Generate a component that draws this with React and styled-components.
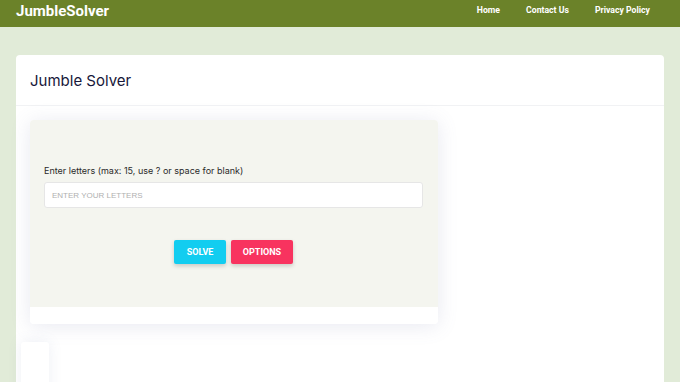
import React from 'react';
import styled, { createGlobalStyle } from 'styled-components';

const GlobalStyle = createGlobalStyle`
  body {
    margin: 0;
    background: #e1ebd8;
    font-family: "Inter", "Liberation Sans", sans-serif;
    overflow: hidden;
  }
`;

const NavBar = styled.nav`
  height: 27px;
  background: #6b8229;
  display: flex;
  align-items: center;
  justify-content: space-between;
  padding: 0 30px 0 16px;
`;

const Brand = styled.div`
  font-family: Roboto, "Liberation Sans", sans-serif;
  font-weight: 700;
  font-size: 15px;
  line-height: 18px;
  color: #fff;
  margin-top: -6px;
`;

const NavLinks = styled.div`
  display: flex;
  gap: 26px;
  margin-top: -6px;
`;

const NavLink = styled.a`
  font-family: Roboto, "Liberation Sans", sans-serif;
  font-weight: 700;
  font-size: 8.7px;
  line-height: 11px;
  color: #fff;
  text-decoration: none;
`;

const Main = styled.main`
  padding: 28px 16px 0;
`;

const Card = styled.section`
  background: #fff;
  border-radius: 4px;
  min-height: 400px;
`;

const CardHeader = styled.header`
  height: 50px;
  display: flex;
  align-items: center;
  padding: 0 14px;
  border-bottom: 1px solid #f1f2f4;
  font-size: 15px;
  color: #17173a;
`;

const CardBody = styled.div`
  padding: 14px 14px 0;
`;

const Panel = styled.div`
  width: 408px;
  border-radius: 4px;
  overflow: hidden;
  box-shadow: 0 2px 20px rgba(110, 120, 170, 0.16);
`;

const PanelTop = styled.div`
  background: #f4f5ef;
  padding: 45px 15px 43px 14px;
`;

const PanelFoot = styled.div`
  height: 17px;
  background: #fff;
`;

const Label = styled.label`
  display: block;
  font-size: 9px;
  line-height: 12px;
  color: #2a2a2a;
  margin-bottom: 5px;
`;

const Input = styled.input`
  display: block;
  box-sizing: border-box;
  width: 100%;
  height: 26px;
  border: 1px solid #e6e6e6;
  border-radius: 3px;
  background: #fff;
  padding: 0 7px;
  font-family: "Liberation Sans", Arial, sans-serif;
  font-size: 8px;
  outline: none;
  &::placeholder {
    color: #b0b0b0;
  }
`;

const ButtonRow = styled.div`
  display: flex;
  justify-content: center;
  gap: 5px;
  margin-top: 32px;
`;

const Button = styled.button`
  height: 24px;
  width: ${p => p.w}px;
  border: none;
  border-radius: 2px;
  background: ${p => p.bg};
  color: #fff;
  font-family: Roboto, "Liberation Sans", sans-serif;
  font-weight: 700;
  font-size: 9px;
  box-shadow: 0 2px 4px rgba(0, 0, 0, 0.18);
  padding: 0;
`;

const FloatBox = styled.div`
  width: 28px;
  height: 60px;
  margin: 18px 0 0 -9px;
  background: #fff;
  border-radius: 3px;
  box-shadow: 0 0 14px rgba(110, 120, 170, 0.12);
`;

export default function App() {
  return (
    <>
      <GlobalStyle />
      <NavBar>
        <Brand>JumbleSolver</Brand>
        <NavLinks>
          <NavLink href="#">Home</NavLink>
          <NavLink href="#">Contact Us</NavLink>
          <NavLink href="#">Privacy Policy</NavLink>
        </NavLinks>
      </NavBar>
      <Main>
        <Card>
          <CardHeader>Jumble Solver</CardHeader>
          <CardBody>
            <Panel>
              <PanelTop>
                <Label>Enter letters (max: 15, use ? or space for blank)</Label>
                <Input placeholder="ENTER YOUR LETTERS" />
                <ButtonRow>
                  <Button w={52} bg="#12cdf0">SOLVE</Button>
                  <Button w={62} bg="#f8335f">OPTIONS</Button>
                </ButtonRow>
              </PanelTop>
              <PanelFoot />
            </Panel>
            <FloatBox />
          </CardBody>
        </Card>
      </Main>
    </>
  );
}
